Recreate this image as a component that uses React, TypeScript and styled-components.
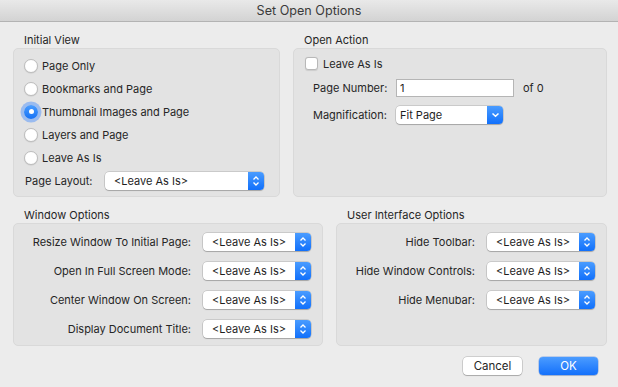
import React from "react";
import styled, { createGlobalStyle } from "styled-components";

const Global = createGlobalStyle`
  html, body { margin: 0; padding: 0; background: #ececec; }
  * { box-sizing: border-box; }
  body { font-family: Inter, "Liberation Sans", sans-serif; font-size: 11px; color: #262626; }
`;

const Window = styled.div`
  width: 618px;
  height: 387px;
  background: #ececec;
  display: flex;
  flex-direction: column;
  overflow: hidden;
`;

const TitleBar = styled.div`
  height: 22px;
  flex: none;
  background: linear-gradient(#e9e9e9, #d3d3d3);
  border-bottom: 1px solid #b3b3b3;
  display: flex;
  align-items: center;
  justify-content: center;
  font-size: 12.6px;
  color: #3a3a3a;
`;

const Body = styled.div`
  padding: 11px 11px 12px 13px;
  display: flex;
  flex-direction: column;
  gap: 11px;
`;

const Row = styled.div<{ $cols: string }>`
  display: grid;
  grid-template-columns: ${(p) => p.$cols};
  column-gap: 13px;
`;

const Group = styled.div`
  display: flex;
  flex-direction: column;
`;

const GroupLabel = styled.div`
  height: 15px;
  line-height: 15px;
  padding-left: 11px;
`;

const Panel = styled.div<{ $h: number }>`
  height: ${(p) => p.$h}px;
  background: #e3e3e3;
  border: 1px solid #d9d9d9;
  border-radius: 5px;
`;

const InitialPanel = styled(Panel)`
  padding: 5px 0 0 10px;
  display: flex;
  flex-direction: column;
`;

const RadioRow = styled.label`
  height: 23px;
  display: flex;
  align-items: center;
  gap: 4px;
`;

const RadioCircle = styled.span<{ $on?: boolean }>`
  width: 14px;
  height: 14px;
  border-radius: 50%;
  flex: none;
  display: flex;
  align-items: center;
  justify-content: center;
  background: ${(p) => (p.$on ? "linear-gradient(#4a9dff, #1672f5)" : "#fff")};
  border: ${(p) => (p.$on ? "none" : "1px solid #bdbdbd")};
  box-shadow: ${(p) =>
    p.$on ? "0 0 0 3.5px rgba(95,155,250,0.55)" : "0 0.5px 1px rgba(0,0,0,0.12)"};
  &::after {
    content: "";
    display: ${(p) => (p.$on ? "block" : "none")};
    width: 5px;
    height: 5px;
    border-radius: 50%;
    background: #fff;
  }
`;

const LayoutRow = styled.div`
  margin-top: 3px;
  display: flex;
  align-items: center;
  height: 18px;
  padding-left: 1px;
`;

const InlineLabel = styled.span<{ $w: number }>`
  width: ${(p) => p.$w}px;
  flex: none;
`;

const SelectBox = styled.div<{ $w: number; $h?: number }>`
  width: ${(p) => p.$w}px;
  height: ${(p) => p.$h ?? 18}px;
  background: #fff;
  border-radius: 4px;
  box-shadow: 0 0 0 0.5px rgba(0, 0, 0, 0.22), 0 1px 1px rgba(0, 0, 0, 0.18);
  display: flex;
  align-items: stretch;
  overflow: hidden;
`;

const SelectText = styled.span<{ $pad: number }>`
  flex: 1;
  display: flex;
  align-items: center;
  padding-left: ${(p) => p.$pad}px;
  white-space: nowrap;
  color: #1e1e1e;
`;

const SelectArrow = styled.span`
  width: 16px;
  flex: none;
  background: linear-gradient(#4a9cff, #1170fb);
  display: flex;
  align-items: center;
  justify-content: center;
`;

const ActionPanel = styled(Panel)`
  padding: 5px 0 0 11px;
  display: flex;
  flex-direction: column;
`;

const CheckRow = styled.label`
  height: 19px;
  display: flex;
  align-items: center;
  gap: 5px;
`;

const CheckBox = styled.span`
  width: 13px;
  height: 13px;
  border-radius: 3px;
  background: #fff;
  border: 1px solid #b8b8b8;
  box-shadow: 0 0.5px 1px rgba(0, 0, 0, 0.1);
  flex: none;
`;

const FieldRow = styled.div<{ $mt: number }>`
  margin-top: ${(p) => p.$mt}px;
  padding-left: 8px;
  display: flex;
  align-items: center;
  height: 18px;
`;

const TextInput = styled.div`
  width: 118px;
  height: 18px;
  background: #fff;
  border: 1px solid #b5b5b5;
  padding-left: 3px;
  display: flex;
  align-items: center;
  color: #1e1e1e;
`;

const OfText = styled.span`
  margin-left: 9px;
`;

const OptionsPanel = styled(Panel)`
  padding: 9px 11px 0 0;
  display: grid;
  grid-template-columns: 1fr 108px;
  grid-auto-rows: 18px;
  column-gap: 12px;
  row-gap: 11px;
  align-items: center;
`;

const RowLabel = styled.span`
  text-align: right;
  white-space: nowrap;
`;

const Footer = styled.div`
  display: flex;
  justify-content: flex-end;
  gap: 17px;
  padding-right: 9px;
`;

const Button = styled.button<{ $primary?: boolean }>`
  width: 59px;
  height: 18px;
  border-radius: 4px;
  font-family: inherit;
  font-size: 11.5px;
  padding: 0;
  border: none;
  color: ${(p) => (p.$primary ? "#fff" : "#262626")};
  background: ${(p) => (p.$primary ? "linear-gradient(#4b9cff, #1470fb)" : "#fff")};
  box-shadow: ${(p) =>
    p.$primary
      ? "0 0 0 0.5px rgba(0,80,220,0.4), 0 1px 1px rgba(0,0,0,0.15)"
      : "0 0 0 0.5px rgba(0,0,0,0.25), 0 1px 1px rgba(0,0,0,0.18)"};
`;

const Stepper = () => (
  <svg width="8" height="12" viewBox="0 0 8 12">
    <path d="M1.5 4.5 L4 2 L6.5 4.5 M1.5 7.5 L4 10 L6.5 7.5" fill="none" stroke="#fff" strokeWidth="1.3" />
  </svg>
);

const ChevronDown = () => (
  <svg width="9" height="6" viewBox="0 0 9 6">
    <path d="M1.5 1.5 L4.5 4.3 L7.5 1.5" fill="none" stroke="#fff" strokeWidth="1.5" />
  </svg>
);

const Select = ({ w, text, pad = 12, single }: { w: number; text: string; pad?: number; single?: boolean }) => (
  <SelectBox $w={w}>
    <SelectText $pad={pad}>{text}</SelectText>
    <SelectArrow>{single ? <ChevronDown /> : <Stepper />}</SelectArrow>
  </SelectBox>
);

const radios = [
  "Page Only",
  "Bookmarks and Page",
  "Thumbnail Images and Page",
  "Layers and Page",
  "Leave As Is",
];

const windowOpts = [
  "Resize Window To Initial Page:",
  "Open In Full Screen Mode:",
  "Center Window On Screen:",
  "Display Document Title:",
];

const uiOpts = ["Hide Toolbar:", "Hide Window Controls:", "Hide Menubar:"];

export default function App() {
  return (
    <Window>
      <Global />
      <TitleBar>Set Open Options</TitleBar>
      <Body>
        <Row $cols="267px 314px">
          <Group>
            <GroupLabel>Initial View</GroupLabel>
            <InitialPanel $h={149}>
              {radios.map((r, i) => (
                <RadioRow key={r}>
                  <RadioCircle $on={i === 2} />
                  {r}
                </RadioRow>
              ))}
              <LayoutRow>
                <InlineLabel $w={80}>Page Layout:</InlineLabel>
                <Select w={159} text="<Leave As Is>" pad={9} />
              </LayoutRow>
            </InitialPanel>
          </Group>
          <Group>
            <GroupLabel>Open Action</GroupLabel>
            <ActionPanel $h={149}>
              <CheckRow>
                <CheckBox />
                Leave As Is
              </CheckRow>
              <FieldRow $mt={6}>
                <InlineLabel $w={83}>Page Number:</InlineLabel>
                <TextInput>1</TextInput>
                <OfText>of 0</OfText>
              </FieldRow>
              <FieldRow $mt={9}>
                <InlineLabel $w={83}>Magnification:</InlineLabel>
                <Select w={107} text="Fit Page" pad={4} single />
              </FieldRow>
            </ActionPanel>
          </Group>
        </Row>
        <Row $cols="310px 271px">
          <Group>
            <GroupLabel>Window Options</GroupLabel>
            <OptionsPanel $h={123}>
              {windowOpts.map((o) => (
                <React.Fragment key={o}>
                  <RowLabel>{o}</RowLabel>
                  <Select w={108} text="<Leave As Is>" pad={9} />
                </React.Fragment>
              ))}
            </OptionsPanel>
          </Group>
          <Group>
            <GroupLabel>User Interface Options</GroupLabel>
            <OptionsPanel $h={123}>
              {uiOpts.map((o) => (
                <React.Fragment key={o}>
                  <RowLabel>{o}</RowLabel>
                  <Select w={108} text="<Leave As Is>" pad={9} />
                </React.Fragment>
              ))}
            </OptionsPanel>
          </Group>
        </Row>
        <Footer>
          <Button>Cancel</Button>
          <Button $primary>OK</Button>
        </Footer>
      </Body>
    </Window>
  );
}
